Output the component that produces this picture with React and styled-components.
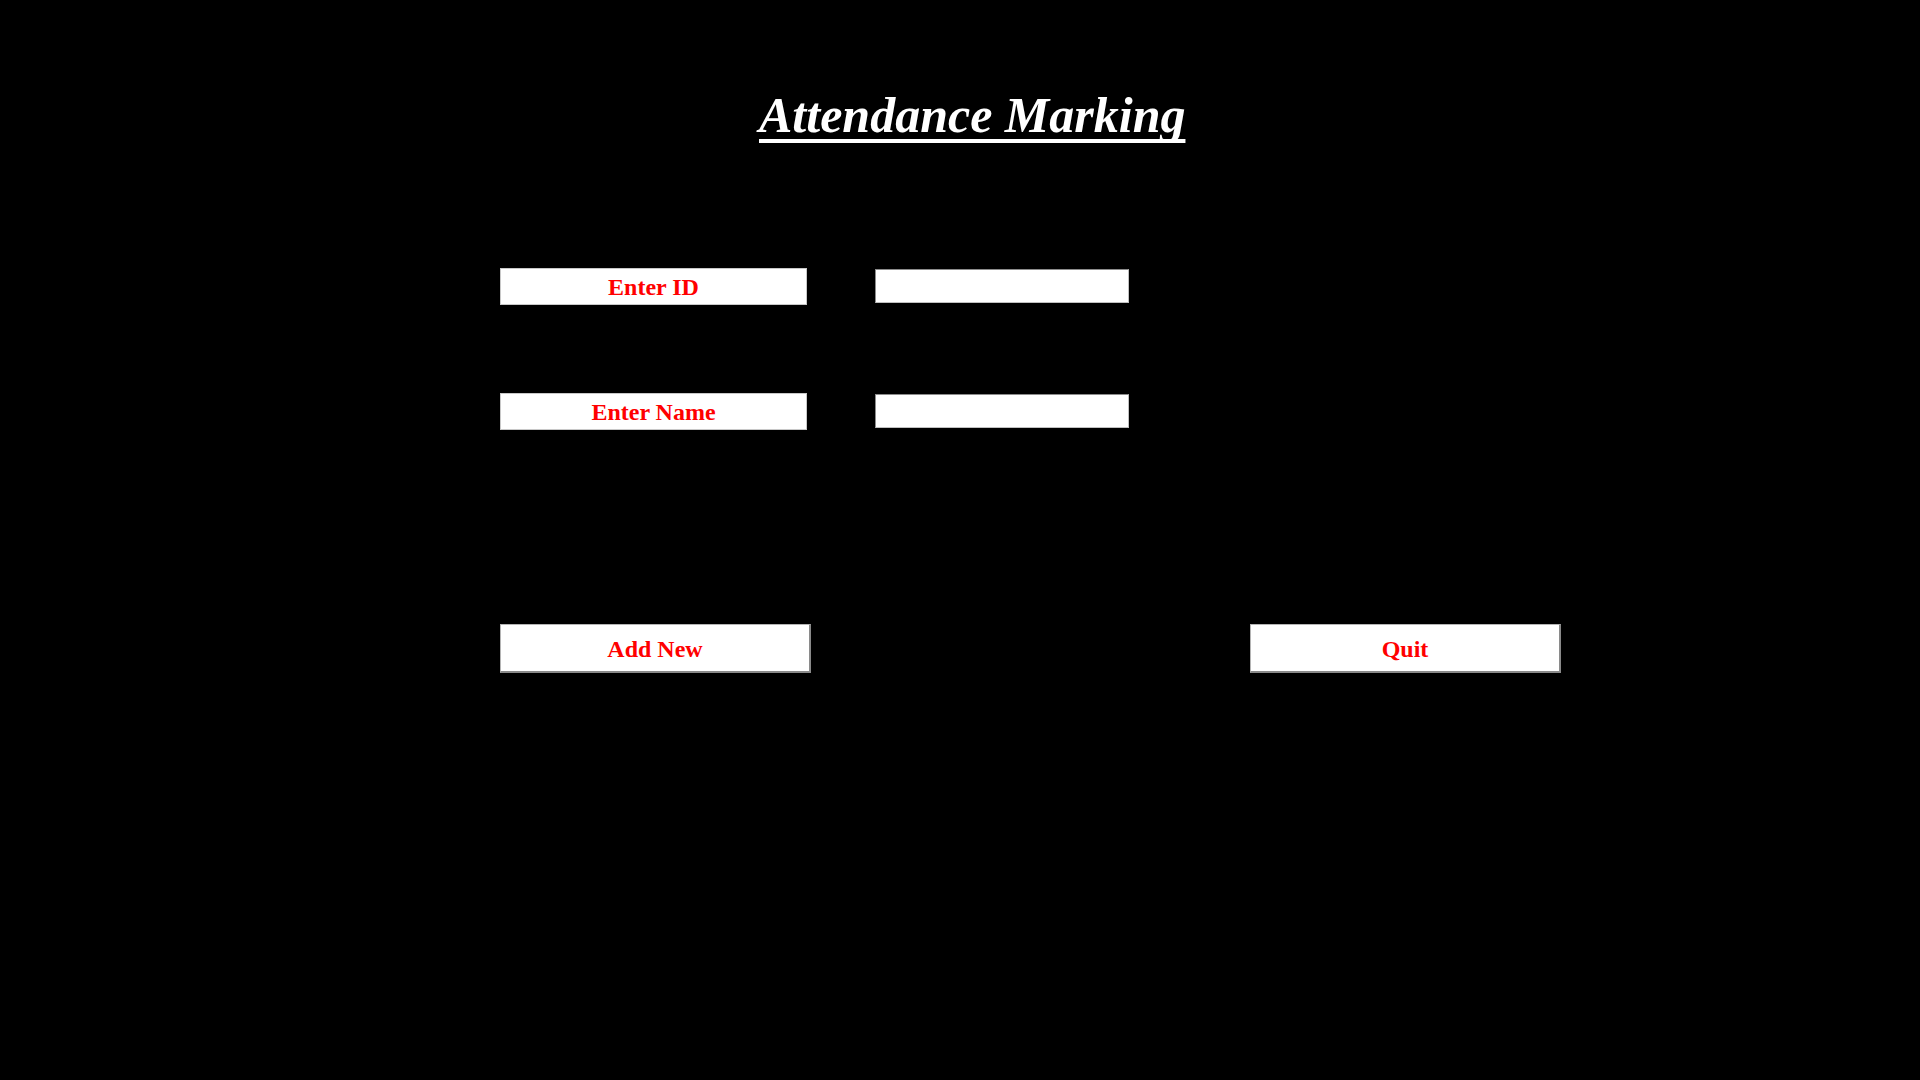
import React from "react";
import styled, { createGlobalStyle } from "styled-components";

const Global = createGlobalStyle`
  html, body { margin: 0; padding: 0; background: #000; }
  body { font-family: "Liberation Serif", "Times New Roman", serif; }
  #root { min-height: 100vh; background: #000; }
`;

const Page = styled.div`
  width: 1920px;
  height: 1080px;
  background: #000;
  padding: 90px 0 0 500px;
  box-sizing: border-box;
  display: flex;
  flex-direction: column;
`;

const TitleRow = styled.header`
  padding-left: 259px;
  height: 50px;
`;

const Title = styled.h1`
  margin: 0;
  font-family: "Liberation Serif", "Times New Roman", serif;
  font-style: italic;
  font-weight: bold;
  font-size: 50px;
  line-height: 50px;
  color: #fff;
  text-decoration: underline;
  text-decoration-thickness: 4px;
  text-underline-offset: 7px;
  text-decoration-skip-ink: none;
  white-space: nowrap;
  display: inline-block;
`;

const Form = styled.div`
  margin-top: 128px;
  display: grid;
  grid-template-columns: 307px 254px;
  grid-auto-rows: 37px;
  column-gap: 68px;
  row-gap: 88px;
  align-items: start;
`;

const Label = styled.div`
  height: 37px;
  box-sizing: border-box;
  background: #fff;
  border: 1px solid #c8c8c8;
  color: #ff0000;
  font-weight: bold;
  font-size: 24px;
  display: flex;
  align-items: center;
  justify-content: center;
  padding-top: 2px;
`;

const Field = styled.input`
  height: 34px;
  width: 254px;
  box-sizing: border-box;
  margin: 1px 0 0;
  background: #fff;
  border: 1px solid #8c8c8c;
  border-right-color: #c0c0c0;
  border-bottom-color: #c0c0c0;
  outline: none;
  font-family: "Liberation Serif", "Times New Roman", serif;
  font-size: 20px;
  padding: 0 4px;
`;

const Actions = styled.div`
  margin-top: 194px;
  display: flex;
  gap: ${(p) => p.$gap}px;
`;

const Button = styled.button`
  width: 311px;
  height: 49px;
  box-sizing: border-box;
  background: #fff;
  border: 1px solid #b4b4b4;
  border-right: 2px solid #8a8a8a;
  border-bottom: 2px solid #8a8a8a;
  color: #ff0000;
  font-family: "Liberation Serif", "Times New Roman", serif;
  font-weight: bold;
  font-size: 24px;
  padding: 3px 0 0;
  cursor: pointer;
`;

export default function App() {
  return (
    <>
      <Global />
      <Page>
        <TitleRow>
          <Title>Attendance Marking</Title>
        </TitleRow>
        <Form>
          <Label>Enter ID</Label>
          <Field type="text" aria-label="ID" />
          <Label>Enter Name</Label>
          <Field type="text" aria-label="Name" />
        </Form>
        <Actions $gap={439}>
          <Button>Add New</Button>
          <Button>Quit</Button>
        </Actions>
      </Page>
    </>
  );
}
